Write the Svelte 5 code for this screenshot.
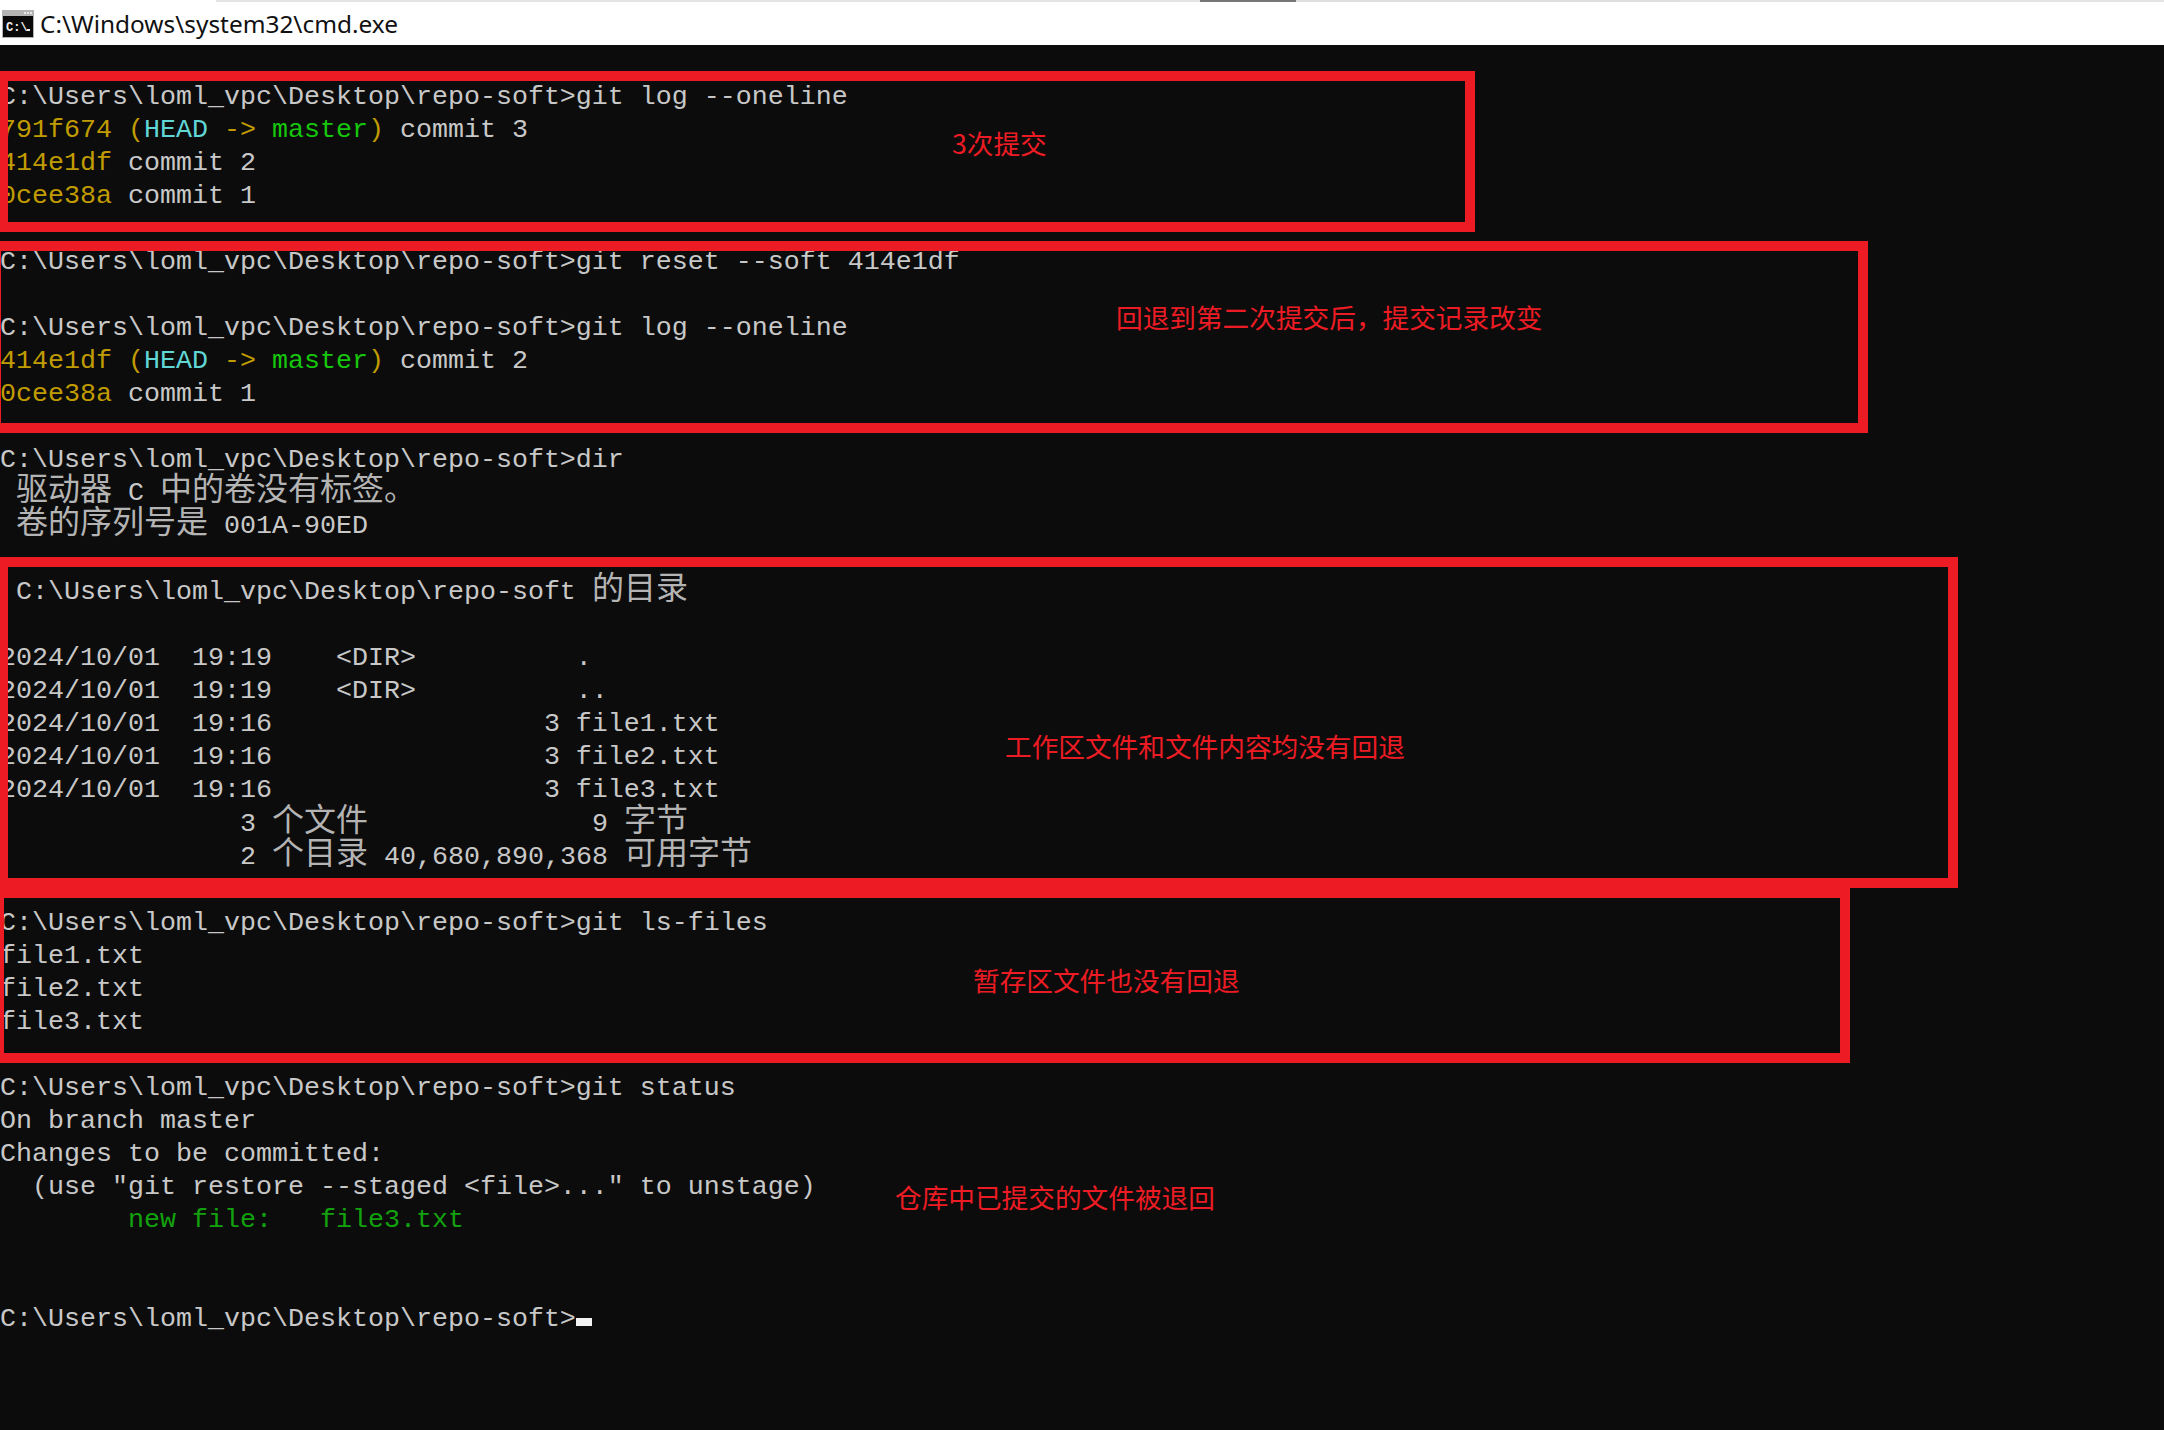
<script>
  const prompt = 'C:\\Users\\loml_vpc\\Desktop\\repo-soft>';

  // each row is a list of [text, colour class]; a plain string is default grey
  const rows = [
    [prompt + 'git log --oneline'],
    [['791f674 ', 'amber'], ['(', 'amber'], ['HEAD', 'cyan'], [' -> ', 'amber'], ['master', 'lime'], [')', 'amber'], ' commit 3'],
    [['414e1df', 'amber'], ' commit 2'],
    [['0cee38a', 'amber'], ' commit 1'],
    [],
    [prompt + 'git reset --soft 414e1df'],
    [],
    [prompt + 'git log --oneline'],
    [['414e1df ', 'amber'], ['(', 'amber'], ['HEAD', 'cyan'], [' -> ', 'amber'], ['master', 'lime'], [')', 'amber'], ' commit 2'],
    [['0cee38a', 'amber'], ' commit 1'],
    [],
    [prompt + 'dir'],
    [' 驱动器 C 中的卷没有标签。'],
    [' 卷的序列号是 001A-90ED'],
    [],
    [' C:\\Users\\loml_vpc\\Desktop\\repo-soft 的目录'],
    [],
    ['2024/10/01  19:19    <DIR>          .'],
    ['2024/10/01  19:19    <DIR>          ..'],
    ['2024/10/01  19:16                 3 file1.txt'],
    ['2024/10/01  19:16                 3 file2.txt'],
    ['2024/10/01  19:16                 3 file3.txt'],
    ['               3 个文件              9 字节'],
    ['               2 个目录 40,680,890,368 可用字节'],
    [],
    [prompt + 'git ls-files'],
    ['file1.txt'],
    ['file2.txt'],
    ['file3.txt'],
    [],
    [prompt + 'git status'],
    ['On branch master'],
    ['Changes to be committed:'],
    ['  (use "git restore --staged <file>..." to unstage)'],
    [['        new file:   file3.txt', 'green']],
    [],
    [],
  ];

  const notes = [
    { cls: 'n1', text: '3次提交' },
    { cls: 'n2', text: '回退到第二次提交后，提交记录改变' },
    { cls: 'n3', text: '工作区文件和文件内容均没有回退' },
    { cls: 'n4', text: '暂存区文件也没有回退' },
    { cls: 'n5', text: '仓库中已提交的文件被退回' },
  ];

  // CJK runs are double width, so they get their own font size
  function split(text) {
    return text.split(/([\u3000-\u9fff]+)/).filter(Boolean);
  }
  const isCjk = (s) => /[\u3000-\u9fff]/.test(s);
  const seg = (s) => (typeof s === 'string' ? [s, ''] : s);
</script>

<div class="window">
  <div class="tabline">
    <span class="thumb"></span>
    <span class="track"></span>
  </div>
  <header class="titlebar">
    <svg class="icon" width="32" height="28" viewBox="0 0 32 28">
      <rect width="32" height="28" fill="#b4b4b4" />
      <rect x="22" y="2" width="2" height="2" fill="#e8e8e8" />
      <rect x="25" y="2" width="2" height="2" fill="#e8e8e8" />
      <rect x="28" y="2" width="2" height="2" fill="#e8e8e8" />
      <rect x="1" y="6" width="30" height="21" fill="#0a0a0a" />
      <text x="4" y="21" class="icon-text">C:\</text>
      <rect x="25" y="19" width="3" height="2" fill="#f0f0f0" />
    </svg>
    <span class="title">C:\Windows\system32\cmd.exe</span>
  </header>

  <main class="term">
    {#each rows as row}
      <div class="row">{#each row as part}{@const [text, color] = seg(part)}{#each split(text) as run}<span class={color} class:cjk={isCjk(run)}>{run}</span>{/each}{/each}</div>
    {/each}
    <div class="row">{prompt}<span class="cursor"></span></div>
  </main>

  <div class="box b1"></div>
  <div class="box b2"></div>
  <div class="box b3"></div>
  <div class="box b4"></div>

  {#each notes as note}
    <div class="note {note.cls}">{note.text}</div>
  {/each}
</div>

<style>
  :global(body) {
    margin: 0;
    background: #0c0c0c;
  }

  .window {
    position: relative;
    width: 2164px;
    height: 1430px;
    overflow: hidden;
    background: #0c0c0c;
  }

  .tabline {
    position: absolute;
    top: 0;
    left: 216px;
    right: 0;
    height: 2px;
    background: #e4e4e4;
  }

  .thumb {
    position: absolute;
    left: 984px;
    width: 96px;
    height: 2px;
    background: #767676;
  }

  .track {
    position: absolute;
    left: 1080px;
    width: 385px;
    height: 2px;
    background: #e0e0e0;
  }

  .titlebar {
    display: flex;
    align-items: center;
    height: 45px;
    padding: 3px 0 0 2px;
    box-sizing: border-box;
    background: #fff;
  }

  .icon {
    flex: none;
    margin-right: 6px;
  }

  .icon-text {
    font: bold 12px "Liberation Mono", monospace;
    fill: #f0f0f0;
  }

  .title {
    font: 24.4px/1 "Noto Sans", sans-serif;
    color: #111;
  }

  .term {
    padding-top: 35.5px;
    font-family: "Liberation Mono", monospace;
    font-size: 26.67px;
    color: #c8c8c8;
  }

  .row {
    height: 33.05px;
    line-height: 33.05px;
    white-space: pre;
  }

  .cjk {
    font-family: "Noto Sans CJK SC", sans-serif;
    font-size: 32px;
    line-height: 0;
    color: #b4b4b4;
  }

  .amber { color: #c19c00; }
  .cyan { color: #61d6d6; }
  .lime { color: #16c60c; }
  .green { color: #13a10e; }

  .cursor {
    display: inline-block;
    width: 16px;
    height: 8px;
    background: #f2f2f2;
  }

  .box {
    position: absolute;
    left: 0;
    box-sizing: border-box;
    border: 10px solid #ed1c24;
  }

  .b1 { top: 71px; width: 1475px; height: 161px; border-left-width: 8px; }
  .b2 { top: 241px; width: 1868px; height: 192px; border-left-width: 1px; }
  .b3 { top: 557px; width: 1958px; height: 331px; border-left-width: 8px; }
  .b4 { top: 888px; width: 1850px; height: 175px; border-left-width: 4px; }

  .note {
    position: absolute;
    font: 26.67px/36px "Noto Sans CJK SC", sans-serif;
    color: #ed1c24;
    white-space: nowrap;
  }

  .n1 { left: 952px; top: 125px; }
  .n2 { left: 1116px; top: 299px; }
  .n3 { left: 1005px; top: 728px; }
  .n4 { left: 973px; top: 962px; }
  .n5 { left: 895px; top: 1179px; }
</style>
